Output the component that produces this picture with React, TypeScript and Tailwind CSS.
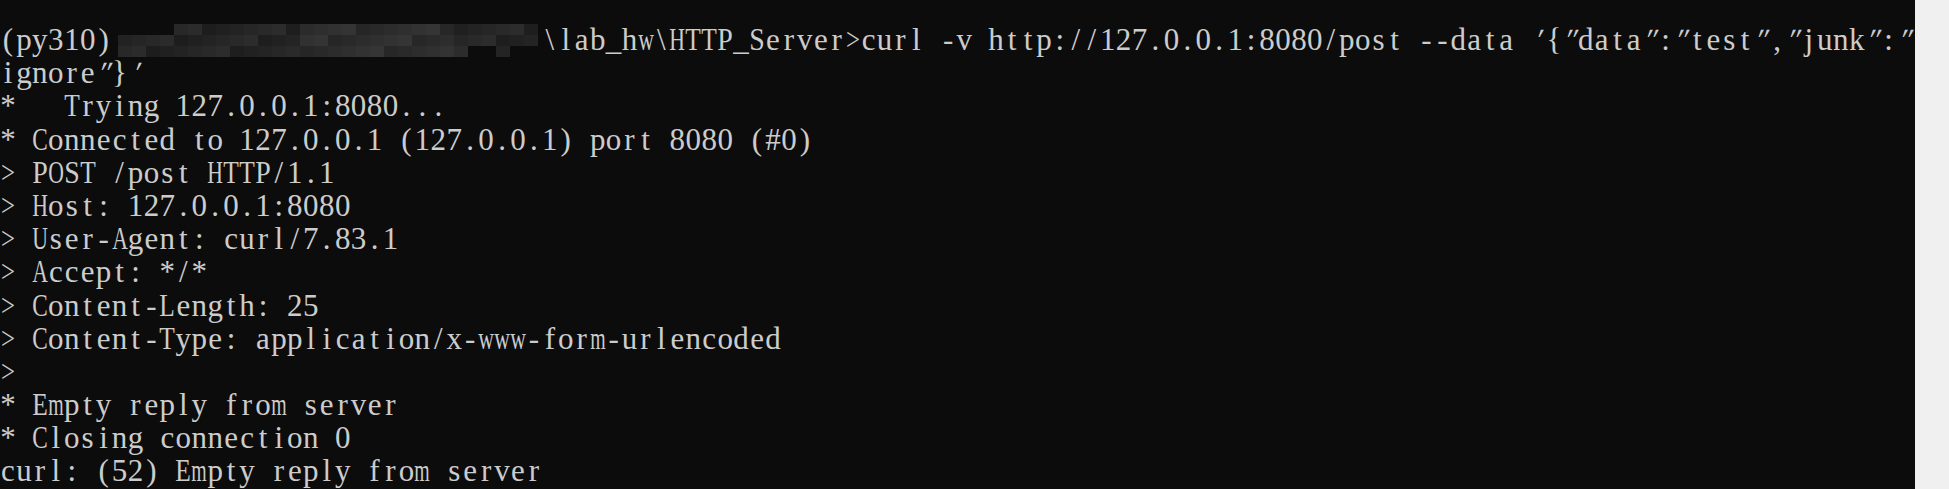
const lines = [
  `(py310) ${' '.repeat(26)}\\lab_hw\\HTTP_Server>curl -v http://127.0.0.1:8080/post --data '{"data":"test","junk":"`,
  `ignore"}'`,
  `*   Trying 127.0.0.1:8080...`,
  `* Connected to 127.0.0.1 (127.0.0.1) port 8080 (#0)`,
  `> POST /post HTTP/1.1`,
  `> Host: 127.0.0.1:8080`,
  `> User-Agent: curl/7.83.1`,
  `> Accept: */*`,
  `> Content-Length: 25`,
  `> Content-Type: application/x-www-form-urlencoded`,
  `>`,
  `* Empty reply from server`,
  `* Closing connection 0`,
  `curl: (52) Empty reply from server`,
]

// The console font is a narrow serif cell font; squeeze the wide
// Times glyphs so every character sits in one fixed cell.
const squeeze: Record<string, string> = {
  m: 'scale-x-[0.64]',
  w: 'scale-x-[0.7]',
  M: 'scale-x-[0.58]',
  W: 'scale-x-[0.55]',
  A: 'scale-x-[0.7]',
  H: 'scale-x-[0.7]',
  U: 'scale-x-[0.7]',
  O: 'scale-x-[0.7]',
  G: 'scale-x-[0.7]',
  C: 'scale-x-[0.75]',
  E: 'scale-x-[0.82]',
  L: 'scale-x-[0.82]',
  T: 'scale-x-[0.82]',
  P: 'scale-x-[0.9]',
  S: 'scale-x-[0.9]',
  '>': 'scale-x-[0.8]',
  '"': '-skew-x-[24deg]',
  "'": '-skew-x-[24deg]',
}

function Cell({ ch }: { ch: string }) {
  return (
    <span className={`flex w-[15.94px] shrink-0 justify-center whitespace-pre ${squeeze[ch] ?? ''}`}>
      {ch}
    </span>
  )
}

function Line({ text }: { text: string }) {
  return (
    <div className="flex h-[33.2px] leading-[33.2px]">
      {Array.from(text).map((ch, i) => (
        <Cell key={i} ch={ch} />
      ))}
    </div>
  )
}

// blurred-out path in the prompt, drawn as a coarse mosaic
function Mosaic() {
  const cols = 30
  const rows = 3
  const cw = 14
  const ch = 11
  const cells: { x: number; y: number; fill: string }[] = []
  for (let r = 0; r < rows; r++) {
    for (let c = 0; c < cols; c++) {
      if (r === 0 && c < 4) continue
      if (r === 2 && c > 24 && c % 3 !== 0) continue
      const mid = c > 12 && c < 24 ? 14 : 4
      const n = ((c * 37 + r * 91) % 17) - 6
      const v = Math.max(22, Math.min(62, 30 + mid + n))
      const hex = v.toString(16).padStart(2, '0')
      cells.push({ x: c * cw, y: r * ch, fill: `#${hex}${hex}${hex}` })
    }
  }
  return (
    <svg
      className="absolute left-[118px] top-[24px]"
      width={cols * cw}
      height={rows * ch}
      viewBox={`0 0 ${cols * cw} ${rows * ch}`}
    >
      {cells.map((cell, i) => (
        <rect key={i} x={cell.x} y={cell.y} width={cw} height={ch} fill={cell.fill} />
      ))}
    </svg>
  )
}

export default function App() {
  return (
    <div className="flex h-[489px] w-[1949px] overflow-hidden">
      {/* Console buffer */}
      <div className="relative flex-1 overflow-hidden bg-[#0c0c0c] pt-[23px] text-[31px] text-[#cccccc] font-['Liberation_Serif','Noto_Sans_CJK_SC',serif]">
        {lines.map((line, i) => (
          <Line key={i} text={line} />
        ))}
        <Mosaic />
      </div>

      {/* Scrollbar track */}
      <div className="w-[34px] bg-[#f0f0f0]" />
    </div>
  )
}
